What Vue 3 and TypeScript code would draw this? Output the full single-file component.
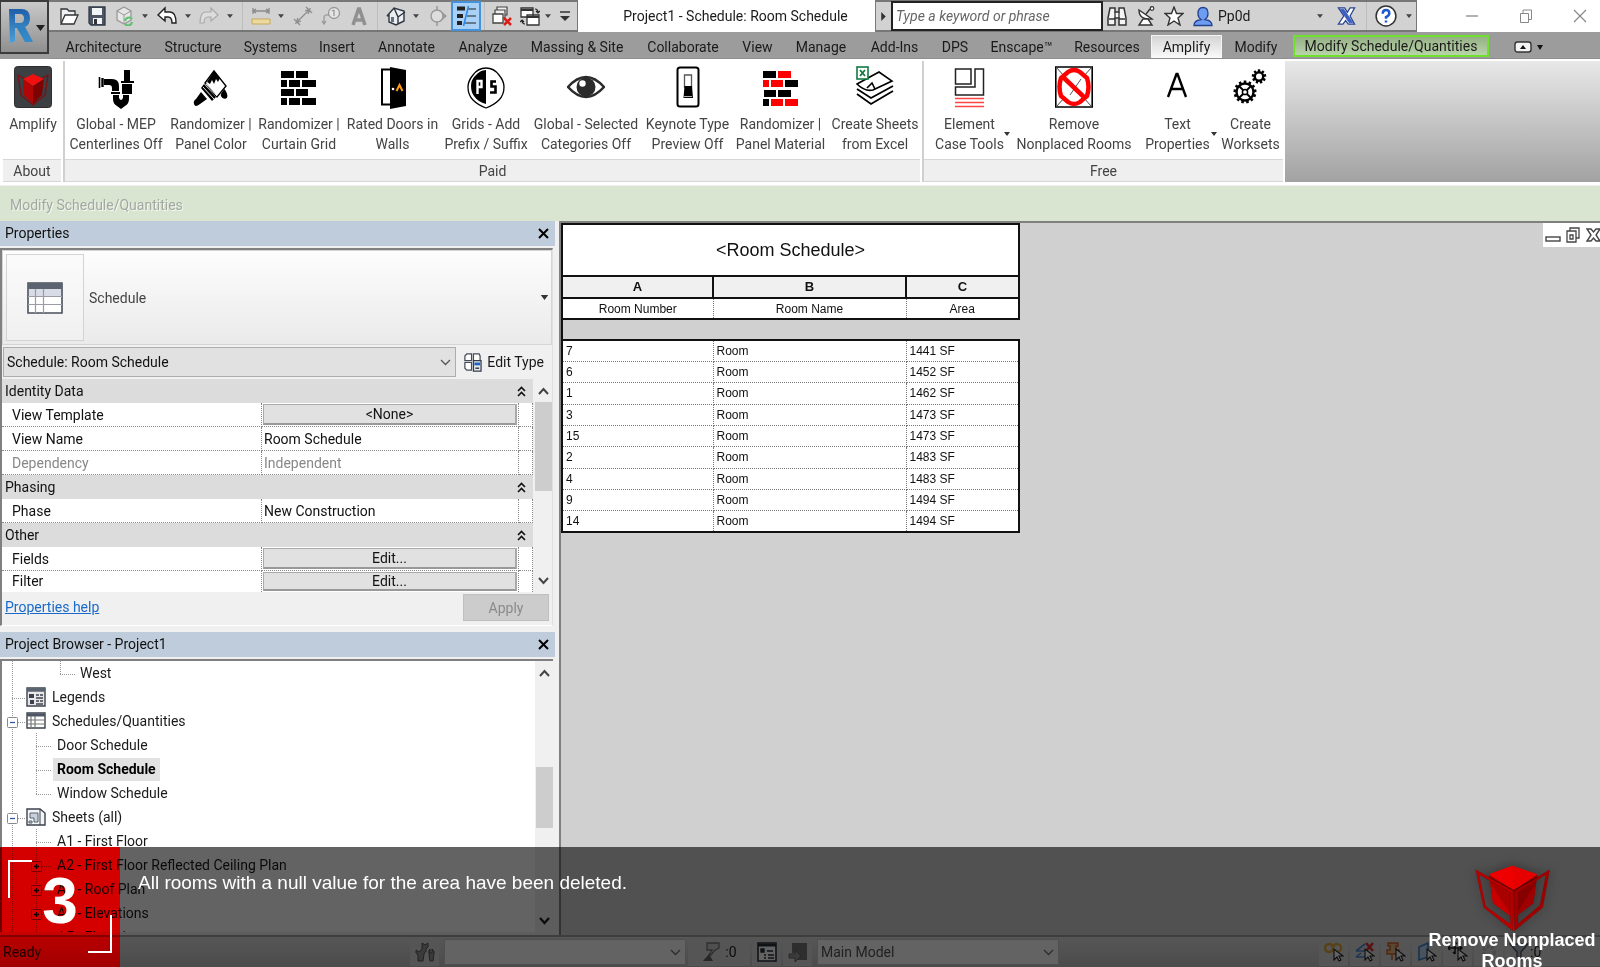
<script setup lang="ts">
import { ref } from 'vue'

interface Tool { icon: string; label: string; kind?: 'arrow' | 'sep' | 'active' }
interface RibbonTool { icon: string; lines: string[]; menu?: boolean }
interface PropRow { kind: 'heading' | 'plain' | 'action' | 'muted'; label: string; value?: string }
interface TreeRow { level: 1 | 2 | 3; label: string; icon?: string; box?: '+' | '-'; last?: boolean; bold?: boolean }

const arrow: Tool = { icon: '', label: 'More', kind: 'arrow' }
const sep: Tool = { icon: '', label: '', kind: 'sep' }

const quickTools: Tool[] = [
  { icon: 'open', label: 'Open' }, { icon: 'save', label: 'Save' }, { icon: 'sync', label: 'Synchronize' }, arrow,
  { icon: 'undo', label: 'Undo' }, arrow, { icon: 'redo', label: 'Redo' }, arrow, sep,
  { icon: 'measure', label: 'Measure' }, arrow, { icon: 'dimension', label: 'Dimension' },
  { icon: 'tag', label: 'Tag' }, { icon: 'letter', label: 'Text' }, sep,
  { icon: 'house', label: '3D View' }, arrow, { icon: 'section', label: 'Section' },
  { icon: 'thin', label: 'Thin Lines', kind: 'active' }, sep,
  { icon: 'closeWin', label: 'Close Inactive' }, { icon: 'switchWin', label: 'Switch Windows' }, arrow,
  { icon: 'customize', label: 'Customize' },
]

const tabs = ['Architecture', 'Structure', 'Systems', 'Insert', 'Annotate', 'Analyze', 'Massing & Site', 'Collaborate',
  'View', 'Manage', 'Add-Ins', 'DPS', 'Enscape™', 'Resources', 'Amplify', 'Modify', 'Modify Schedule/Quantities']
const activeTab = ref('Amplify')

const ribbon: { name: string; cls: string; tools: RibbonTool[] }[] = [
  { name: 'About', cls: 'about', tools: [{ icon: 'amplify', lines: ['Amplify'] }] },
  {
    name: 'Paid', cls: 'paid', tools: [
      { icon: 'pipe', lines: ['Global - MEP', 'Centerlines Off'] },
      { icon: 'paint', lines: ['Randomizer |', 'Panel Color'] },
      { icon: 'bricks', lines: ['Randomizer |', 'Curtain Grid'] },
      { icon: 'door', lines: ['Rated Doors in', 'Walls'] },
      { icon: 'prefix', lines: ['Grids - Add', 'Prefix / Suffix'] },
      { icon: 'eye', lines: ['Global - Selected', 'Categories Off'] },
      { icon: 'keynote', lines: ['Keynote Type', 'Preview Off'] },
      { icon: 'redBricks', lines: ['Randomizer |', 'Panel Material'] },
      { icon: 'sheets', lines: ['Create Sheets', 'from Excel'] },
    ],
  },
  {
    name: 'Free', cls: 'free', tools: [
      { icon: 'element', lines: ['Element', 'Case Tools'], menu: true },
      { icon: 'remove', lines: ['Remove', 'Nonplaced Rooms'] },
      { icon: 'textA', lines: ['Text', 'Properties'], menu: true },
      { icon: 'gears', lines: ['Create', 'Worksets'] },
    ],
  },
]

const props: PropRow[] = [
  { kind: 'heading', label: 'Identity Data' },
  { kind: 'action', label: 'View Template', value: '<None>' },
  { kind: 'plain', label: 'View Name', value: 'Room Schedule' },
  { kind: 'muted', label: 'Dependency', value: 'Independent' },
  { kind: 'heading', label: 'Phasing' },
  { kind: 'plain', label: 'Phase', value: 'New Construction' },
  { kind: 'heading', label: 'Other' },
  { kind: 'action', label: 'Fields', value: 'Edit...' },
  { kind: 'action', label: 'Filter', value: 'Edit...' },
]

const tree: TreeRow[] = [
  { level: 3, label: 'West', last: true },
  { level: 1, label: 'Legends', icon: 'legend' },
  { level: 1, label: 'Schedules/Quantities', icon: 'grid', box: '-' },
  { level: 2, label: 'Door Schedule' },
  { level: 2, label: 'Room Schedule', bold: true },
  { level: 2, label: 'Window Schedule', last: true },
  { level: 1, label: 'Sheets (all)', icon: 'sheet', box: '-' },
  { level: 2, label: 'A1 - First Floor' },
  { level: 2, label: 'A2 - First Floor Reflected Ceiling Plan', box: '+' },
  { level: 2, label: 'A3 - Roof Plan', box: '+' },
  { level: 2, label: 'A4 - Elevations', box: '+' },
  { level: 2, label: 'A5 - Elevations', box: '+' },
]
const guideWidth = { 1: 26, 2: 53, 3: 76 }
const branchX = { 1: 12, 2: 36, 3: 60 }

const rooms: [string, string, string][] = [
  ['7', 'Room', '1441 SF'], ['6', 'Room', '1452 SF'], ['1', 'Room', '1462 SF'],
  ['3', 'Room', '1473 SF'], ['15', 'Room', '1473 SF'], ['2', 'Room', '1483 SF'],
  ['4', 'Room', '1483 SF'], ['9', 'Room', '1494 SF'], ['14', 'Room', '1494 SF'],
]

function bricks(alt: string): string {
  const rows: [number, number, number, boolean][] = [
    [1, 5, 13, false], [16, 5, 13, true],
    [1, 14, 6, true], [9, 14, 12, true], [23, 14, 13, false],
    [2, 24, 12, false], [16, 24, 13, false],
    [1, 33, 6, false], [9, 33, 12, true], [23, 33, 13, true],
  ]
  return rows.map(([x, y, w, c]) => `<rect x="${x}" y="${y}" width="${w}" height="7" fill="${c ? alt : '#000'}"/>`).join('')
}

function gear(cx: number, cy: number, r: number, n: number, w: number): string {
  const teeth = Array.from({ length: n }, (_, i) =>
    `<rect x="${cx - w / 2}" y="${cy - r - 3}" width="${w}" height="5" transform="rotate(${(360 / n) * i} ${cx} ${cy})"/>`).join('')
  return `${teeth}<circle cx="${cx}" cy="${cy}" r="${r}" fill="#fff" stroke="#000" stroke-width="2.4"/>`
}

const ribbonIcons: Record<string, string> = {
  amplify: '<rect x=".5" y=".5" width="37" height="41" rx="3" fill="#3c4043" stroke="#2b2d2f"/><path d="M4 9l15 8 15-8-3 20-12 10L7 29z" fill="none" stroke="#7b1013" stroke-width="1.3"/><path d="M9 13l10-5 11 5-11 7z" fill="#f01010"/><path d="M9 13l10 7v18L10 29z" fill="#b20505"/><path d="M30 13l-11 7v18l9-9z" fill="#7d0303"/>',
  pipe: '<path d="M2.500 11v11" stroke="#000" stroke-width="1.600"/><path d="M5.500 12v9" stroke="#000" stroke-width="2.400"/><path d="M7 13h8q7 0 7 7v5h-7v-3q0-3-3-3H7zM14 26h9v2h-9zM16 29h6v3q2 4 4 0v-3h6v4q0 5-4 7l-4 3-4-3q-4-2-4-7zM27 4h6v11h-6zM24 15h13v2H24zM25 18h10v10H25z"/>',
  paint: '<path d="M22 5l12 15-9 11L13 17z" fill="#fff" stroke="#000" stroke-width="1.400"/><path d="M22 5l6 7-2 4-2-3-2 5-2-4-2 4-3-2z"/><path d="M12 18l12 13-4 4-11-13z"/><path d="M11 21l11 12M14 18l11 12" stroke="#fff" stroke-width=".9"/><path d="M9 26l6 7-7 5q-5 4-6 0-1-3 2-5z"/><path d="M32.500 23q4 6 2.500 8.500t-5 0 2.500-8.500z"/>',
  bricks: '<path d="M1 5h13v7H1zM16 5h12v7H16zM1 14h6v7H1zM9 14h11v7H9zM22 14h14v7H22zM1 23h13v7H1zM16 23h12v7H16zM1 32h6v7H1zM9 32h11v7H9zM22 32h14v7H22z"/>',
  door: '<path d="M8 3.500h11v35H8z" fill="#fff" stroke="#000" stroke-width="2"/><path d="M16 1l16 3v36l-16 3z"/><path d="M22.500 25l3-6 3 6" fill="none" stroke="#ff9a1a" stroke-width="2"/><circle cx="19" cy="23" r="1.300" fill="#fff"/>',
  prefix: '<path d="M19 2q8 0 13 7 5 6 5 12 0 8-5 13t-13 8q-8-3-13-8T1 21q0-6 5-12 5-7 13-7z" fill="#fff" stroke="#000" stroke-width="1.300"/><path d="M19 4v34q-8-2-12-8-3-4-3-10t4-10q5-6 11-6z"/><path d="M10.500 28V15h4v6h-4" fill="none" stroke="#fff" stroke-width="2.400"/><path d="M29 15.500h-4.500v5h4v6H23" fill="none" stroke="#000" stroke-width="2.600"/>',
  eye: '<path d="M1 21Q19 1 37 21 19 41 1 21z" fill="#fff" stroke="#2b2b2b" stroke-width="2.600"/><circle cx="19" cy="21" r="9.500" fill="#2b2b2b"/><circle cx="15.500" cy="17.500" r="3.200" fill="#fff"/>',
  keynote: '<rect x="8.500" y="1.500" width="21" height="39" rx="2.500" fill="#fff" stroke="#000" stroke-width="2"/><path d="M15.500 9h7v12h-7z" fill="#fff" stroke="#555" stroke-width="1.300"/><path d="M15.500 20h7.500l1 12h-9.500z"/><path d="M15 30.500h8" stroke="#fff" stroke-width=".7"/>',
  redBricks: bricks('#f00'),
  sheets: '<path d="M1 18L23 6l13 9-19 9q-8 2-16-6z" fill="#fff" stroke="#000" stroke-width="1.600"/><path d="M1 23l14 9 22-12M1 28l14 10 22-13" fill="none" stroke="#000" stroke-width="1.800"/><path d="M11 22l5-5 3 6" fill="none" stroke="#000" stroke-width="1.600"/><rect x="1" y="1" width="11" height="12" fill="#fff" stroke="#0f7b41" stroke-width="1.600"/><path d="M4 4l5 6M9 4l-5 6" stroke="#0f7b41" stroke-width="1.800"/>',
  element: '<path d="M4.500 3h15.500v15H4.500zM24 3h8.500v26H4.500v-8H24z" fill="#fff" stroke="#222" stroke-width="1.500"/><path d="M4 32.500h29M4 36.500h29M4 40.500h29" stroke="#f44" stroke-width="1.600"/>',
  remove: '<path d="M.8 1h36.400v40H.8z" fill="#fff" stroke="#000" stroke-width="1.600"/><path d="M1 1l36 40M37 1L1 41" stroke="#444"/><path d="M13 6q6-4 12 0l7 6q3 9 0 18l-7 6q-6 4-12 0l-7-6q-3-9 0-18z" fill="#fff" stroke="#f00" stroke-width="4.500"/><path d="M15 29l11-16" stroke="#555"/><path d="M8 11l22 21" stroke="#f00" stroke-width="4.500"/>',
  textA: '<path d="M9 31l8.500-23h1L27 31M12 23h12" fill="none" stroke="#000" stroke-width="2.400"/>',
  gears: gear(13, 26, 8.5, 13, 2.6) + '<path d="M7 20l12 12M19 20L7 32" stroke="#000" stroke-width="1.800"/><circle cx="13" cy="26" r="2.600" fill="#fff" stroke="#000" stroke-width="1.500"/>' + gear(27, 10.5, 4.2, 9, 2.4),
}

const icons: Record<string, string> = {
  open: '<path d="M2 17V3h6l2 2h6v4" fill="#eef0f3" stroke="#333" stroke-width="1.300"/><path d="M2 18l4-9h13l-4 9z" fill="#fff" stroke="#333" stroke-width="1.300"/>',
  save: '<path d="M2 1h16v18H4l-2-2z" fill="#4c5664" stroke="#333b46" stroke-width="1.300"/><path d="M5 2h10v7H5zM6 12h9v6H6z" fill="#f3f4f6"/><path d="M7 13h3v5H7z" fill="#333"/>',
  sync: '<path d="M10 1l7 4v9l-7 4-7-4V5z" fill="#e6e6e6" stroke="#999" stroke-width="1.300"/><path d="M3 5l7 4 7-4M10 9v9" fill="none" stroke="#999"/><path d="M11 15a4 4 0 017-2M18 16a4 4 0 01-7 2" fill="none" stroke="#5cc36d" stroke-width="2"/>',
  undo: '<path d="M1 9l7-7v4h5q6 0 6 11h-4q0-6-4-6H8v4z" fill="#fff" stroke="#222" stroke-width="1.400"/>',
  redo: '<path d="M19 9l-7-7v4H7q-6 0-6 11h4q0-6 4-6h3v4z" fill="#ddd" stroke="#aaa" stroke-width="1.200"/>',
  measure: '<path d="M2 5h16M2 2v6M18 2v6M5 3L2 5l3 2M15 3l3 2-3 2" fill="none" stroke="#8b8b8b" stroke-width="1.300"/><path d="M1 13h18v5H1z" fill="#ecd9a0" stroke="#c9a95a"/>',
  dimension: '<path d="M3 17L17 3M1 13l6 6M13 1l6 6M5 12l-2 5 5-2M12 5l5-2-2 5" fill="none" stroke="#8f8f8f" stroke-width="1.300"/>',
  tag: '<circle cx="13" cy="7" r="5.500" fill="#e4e4e4" stroke="#999" stroke-width="1.300"/><path d="M13 4v6M11 5l2-1M8 9q-5-1-5 3v6M1 15l2 3 2-3" fill="none" stroke="#999" stroke-width="1.300"/>',
  letter: '<path d="M4 19L9.500 3h1L16 19M6 14h8" fill="none" stroke="#909090" stroke-width="3.500"/>',
  house: '<path d="M1 10l7-8 10 3v10l-8 4-7-3V9z" fill="#eceff2" stroke="#2e3640" stroke-width="1.400"/><path d="M8 2l4 9v7M12 11l7-5" fill="none" stroke="#2e3640" stroke-width="1.400"/><path d="M5 11h3v5H5z" fill="#66717e"/>',
  section: '<path d="M9 0v5M9 15v5" stroke="#999" stroke-width="1.500"/><path d="M12 4l7 6-7 6z" fill="#999"/><circle cx="9" cy="10" r="6" fill="#ddd" stroke="#999" stroke-width="1.400"/>',
  thin: '<path d="M1 2.500h8M1 10h6M1 17h5" stroke="#222" stroke-width="4"/><path d="M12 3h8M11 10h9M9 17h11" stroke="#222" stroke-width="1.200"/><path d="M12.500 0L7.500 20" stroke="#2c8ae8" stroke-width="1.600"/>',
  closeWin: '<path d="M5 1h10v8H5z" fill="#eee" stroke="#444" stroke-width="1.200"/><path d="M3 4h10v8H3z" fill="#eee" stroke="#444" stroke-width="1.200"/><path d="M1 8h10v9H1z" fill="#fff" stroke="#444" stroke-width="1.300"/><path d="M12 12l7 7M19 12l-7 7" stroke="#d9201a" stroke-width="2.600"/>',
  switchWin: '<path d="M1 2h12v9H1zM7 9h12v10H7z" fill="#fff" stroke="#333" stroke-width="1.300"/><path d="M1 4h12M7 11h12" stroke="#333" stroke-width="2"/><path d="M15 3q3 0 3 4M16 5l2 2 2-2M5 18q-3 0-3-4M0 16l2-2 2 2" fill="none" stroke="#222" stroke-width="1.200"/>',
  customize: '<path d="M5 6h10" stroke="#333" stroke-width="1.500"/><path d="M5 10h10l-5 5z" fill="#333"/>',
  binoc: '<path d="M3 2h5v4h4V2h5l2 10v7h-7v-7H8v7H1v-7z" fill="#f5f5f5" stroke="#333" stroke-width="1.500"/><path d="M8 6v6M12 6v6M2 13h6M12 13h6" stroke="#333" stroke-width="1.300"/>',
  dish: '<path d="M3 4q0 10 13 9z" fill="#fff" stroke="#333" stroke-width="1.400"/><path d="M10 8l4-5" stroke="#333" stroke-width="1.400"/><circle cx="16" cy="2.500" r="1.800" fill="#fff" stroke="#333" stroke-width="1.200"/><path d="M3 19h13l-4-6H7z" fill="#fff" stroke="#333" stroke-width="1.400"/>',
  star: '<path d="M10 1l2.500 6.500H19l-5 4.500 2 7-6-4-6 4 2-7-5-4.500h6.500z" fill="#fff" stroke="#333" stroke-width="1.400"/>',
  user: '<path d="M10 1q5 0 5 6 0 4-3 6 7 1 7 6H1q0-5 7-6-3-2-3-6 0-6 5-6z" fill="#6d9df2" stroke="#23438f" stroke-width="1.300"/>',
  exchange: '<path d="M1 1h7l3 5 3-5h5l-5 9 5 9h-7l-3-4-3 4H1l6-9z" fill="#fff" stroke="#2a4590" stroke-width="1.400"/><path d="M3 2.500h4l10 15h-4z" fill="#3a5fc0" stroke="#3a5fc0"/>',
  help: '<circle cx="10" cy="10" r="9" fill="#fff" stroke="#333" stroke-width="1.400"/><path d="M7 8q0-3.500 3-3.500T13 7.500q0 2-3 3.500v1.500M10 14v2" fill="none" stroke="#1f57cf" stroke-width="2.300"/>',
  legend: '<path d="M1 1h18v18H1z" fill="#e8e8ea" stroke="#3b424d" stroke-width="1.400"/><path d="M1 3h18" stroke="#5b6370" stroke-width="3.500"/><path d="M3 7h5v4H3zM4 13h4v4H4z" fill="#3b424d"/><path d="M10 8h3M14 8h3M10 11h7M10 14h3M14 14h3M10 17h7" stroke="#3b424d" stroke-width="1.300"/>',
  grid: '<path d="M1 2h18v15H1z" fill="#fff" stroke="#3b424d" stroke-width="1.400"/><path d="M1 4h18" stroke="#4c5664" stroke-width="3"/><path d="M1 9h18M1 13h18M5 5v12M9 5v12" stroke="#777" stroke-width="1.200"/>',
  sheet: '<path d="M1 2h13l5 4v12H1z" fill="#f3f4f6" stroke="#3b424d" stroke-width="1.400"/><path d="M14 2v16" stroke="#3b424d"/><path d="M4 6h8v9H8v-4H4zM3 14h3v2H3z" fill="#c8d1dc" stroke="#59636f"/>',
  editType: '<path d="M2 3l2-2h5v7H2zM11 1h6l1 2v5h-7zM2 10h7v8H4l-2-2z" fill="#fff" stroke="#444c57" stroke-width="1.300"/><path d="M11 8h8v11h-8z" fill="#e5ebf3" stroke="#333b46" stroke-width="1.300"/><path d="M12 10h6v3h-6z" fill="#1d62c4"/><path d="M13 16h4" stroke="#333" stroke-width="1.500"/>',
  wrench: '<path d="M7 5V1l3 2 3-2v4l-2 2v2l-2 3-1 7H3v-6l-2-2V8l3 2 3-3zM15 7v4h2V7q3 2 2 5l-1 7h-3l-1-7q-1-3 1-5z" fill="#999" stroke="#555"/>',
  filter: '<path d="M6 1h12v5l-5 3-3 4H8l3-5H6z" fill="#ccc" stroke="#777" stroke-width="1.300"/><path d="M2 19l6-7 4 7z" fill="#666"/>',
  list: '<path d="M1 1h18v18H1z" fill="#fff" stroke="#2b313a" stroke-width="1.600"/><path d="M1 3h18" stroke="#2b313a" stroke-width="3"/><path d="M4 7h3v3H4zM10 9h6M7 13h2M11 13h6M7 16h2M11 16h6" fill="#2b313a" stroke="#2b313a" stroke-width="1.400"/>',
  exclude: '<path d="M4 1h15v17H9V11H4z" fill="#777"/><path d="M1 12h6V8l6 6-6 6v-4H1z" fill="#999" stroke="#666"/>',
  selLink: '<path d="M1 6a4 4 0 014-4q3 0 4 3 1-3 4-3a4 4 0 010 8q-3 0-4-3-1 3-4 3a4 4 0 01-4-4z" fill="none" stroke="#e0a83a" stroke-width="2.400"/>',
  selUnder: '<path d="M1 9l9-7M1 9h9M1 15h12M1 15l5-4" fill="none" stroke="#4b86d6" stroke-width="1.600"/><path d="M11 1l7 8M18 1l-7 8" stroke="#d33" stroke-width="2.600"/>',
  selPin: '<path d="M2 1h10v3h-2v4h3v4H1V8h3V4H2zM6 12v6" fill="#e8b98a" stroke="#d0652a" stroke-width="1.500"/>',
  selFace: '<path d="M2 5l9-4v14L2 18z" fill="#b9d6f2" stroke="#3e82c4" stroke-width="1.600"/>',
  drag: '<path d="M0 6h14M7 0v12M2 4L0 6l2 2M12 4l2 2-2 2M5 2l2-2 2 2M5 10l2 2" fill="none" stroke="#222" stroke-width="1.600"/>',
  gearSoft: '<circle cx="10" cy="10" r="6" fill="none" stroke="#bbb" stroke-width="4" stroke-dasharray="3 2"/>',
  funnel: '<path d="M1 2h18l-7 8v8l-4-3v-5z" fill="#a9b3c0" stroke="#4a525e" stroke-width="1.300"/>',
}
const cursor = '<path d="M10 7v11l3-3 2 4 2-1-2-4h4z" fill="#fff" stroke="#222" stroke-width="1.100"/>'
const statusTools = ['selLink', 'selUnder', 'selPin', 'selFace', 'drag']
</script>

<template>
  <div class="app">
    <header class="head">
      <button class="app-btn" aria-label="Application menu">
        <svg width="48" height="54" viewBox="0 0 48 54">
          <defs>
            <linearGradient id="rg" x1="0" y1="0" x2="0" y2="1"><stop offset="0" stop-color="#1d5fa8" /><stop offset="1" stop-color="#4ba0d8" /></linearGradient>
          </defs>
          <path d="M9 9h12q9 0 9 9 0 7-5 9l8 15h-8l-8-14h-2v13l-5 2z M15 14v9h5q4 0 4-4.500T20 14z" fill="url(#rg)" fill-rule="evenodd" />
          <path d="M17 28l8 14h8l-8-15z" fill="#2b7fc0" opacity=".6" />
          <path d="M36 25h9l-4.500 6z" fill="#222" />
        </svg>
      </button>
      <div class="titlebar">
        <div class="qat">
          <template v-for="(t, i) in quickTools" :key="i">
            <span v-if="t.kind === 'sep'" class="vsep"></span>
            <button v-else :class="['flat', t.kind]" :aria-label="t.label">
              <svg v-if="t.kind === 'arrow'" width="6" height="4" viewBox="0 0 8 5"><path d="M0 0h8L4 5z" fill="#444" /></svg>
              <svg v-else width="20" height="20" viewBox="0 0 20 20" v-html="icons[t.icon]"></svg>
            </button>
          </template>
        </div>
        <div class="title">Project1 - Schedule: Room Schedule</div>
        <div class="info">
          <button class="flat" aria-label="Collapse search"><svg width="5" height="9" viewBox="0 0 5 10"><path d="M0 0l5 5-5 5z" fill="#333" /></svg></button>
          <input class="search" type="text" placeholder="Type a keyword or phrase" aria-label="Search" />
          <button v-for="n in ['binoc', 'dish', 'star']" :key="n" class="flat" :aria-label="n"><svg width="20" height="20" viewBox="0 0 20 20" v-html="icons[n]"></svg></button>
          <button class="flat user"><svg width="20" height="21" viewBox="0 0 20 20" v-html="icons.user"></svg><span>Pp0d</span></button>
          <button class="flat" aria-label="Account menu"><svg width="6" height="4" viewBox="0 0 8 5"><path d="M0 0h8L4 5z" fill="#444" /></svg></button>
          <button class="flat" aria-label="Exchange"><svg width="19" height="18" viewBox="0 0 20 20" v-html="icons.exchange"></svg></button>
          <span class="vsep"></span>
          <button class="flat" aria-label="Help"><svg width="22" height="22" viewBox="0 0 20 20" v-html="icons.help"></svg></button>
          <button class="flat" aria-label="Help menu"><svg width="6" height="4" viewBox="0 0 8 5"><path d="M0 0h8L4 5z" fill="#444" /></svg></button>
        </div>
        <div class="winctl">
          <button class="flat" aria-label="Minimize"><svg width="14" height="14" viewBox="0 0 14 14"><path d="M1 7h12" stroke="#888" stroke-width="1.300" /></svg></button>
          <button class="flat" aria-label="Restore"><svg width="14" height="14" viewBox="0 0 14 14" fill="none" stroke="#888"><path d="M1.500 4.500h8v9h-8zM4 4V1h8.500v9.500H10" /></svg></button>
          <button class="flat" aria-label="Close"><svg width="14" height="14" viewBox="0 0 14 14"><path d="M1 1l12 12M13 1L1 13" stroke="#888" stroke-width="1.200" /></svg></button>
        </div>
      </div>
      <nav class="tabs">
        <button v-for="t in tabs" :key="t" :class="['tab', { on: t === activeTab, ctx: t.startsWith('Modify S') }]" @click="activeTab = t">{{ t }}</button>
        <button class="flat cycle" aria-label="Minimize ribbon">
          <svg width="30" height="14" viewBox="0 0 30 14"><rect x="1" y="2" width="16" height="10" rx="2.500" fill="#f4f4f4" stroke="#333" stroke-width="1.400" /><path d="M6 9l3-4 3 4zM23 5h6l-3 5z" fill="#111" /></svg>
        </button>
      </nav>
    </header>

    <section class="ribbon">
      <div v-for="g in ribbon" :key="g.name" :class="['group', g.cls]">
        <div class="tools">
          <button v-for="t in g.tools" :key="t.icon" class="tool">
            <svg width="38" height="43" viewBox="0 0 38 43" v-html="ribbonIcons[t.icon]"></svg>
            <span class="lbl"><span v-for="l in t.lines" :key="l">{{ l }}</span></span>
            <svg v-if="t.menu" class="caret" width="6" height="4" viewBox="0 0 6 4"><path d="M0 0h6L3 4z" fill="#333" /></svg>
          </button>
        </div>
        <div class="gname">{{ g.name }}</div>
      </div>
      <div class="rest"></div>
    </section>

    <div class="options">Modify Schedule/Quantities</div>

    <main class="work">
      <aside class="side">
        <section class="panel properties">
          <h2 class="phead">Properties<button class="flat" aria-label="Close Properties"><svg width="11" height="11" viewBox="0 0 11 11"><path d="M1 1l9 9M10 1l-9 9" stroke="#000" stroke-width="2" /></svg></button></h2>
          <div class="pbody">
            <button class="type">
              <span class="thumb">
                <svg width="36" height="32" viewBox="0 0 36 32"><path d="M1 1h34v30H1z" fill="#fff" stroke="#4a505b" stroke-width="1.600" /><path d="M1 1h34v6H1z" fill="#5b6270" /><path d="M2 7h32v7H2z" fill="#d8dce6" /><path d="M1 14.500h34M1 22.500h34M8.500 7v24M16.500 7v24" stroke="#9a9da3" stroke-width="1.200" /></svg>
              </span>
              <span class="tname">Schedule</span>
              <svg width="9" height="5" viewBox="0 0 9 6"><path d="M0 0h9L4.500 6z" fill="#333" /></svg>
            </button>
            <div class="selrow">
              <span class="combo">
                <select aria-label="Type filter"><option>Schedule: Room Schedule</option></select>
                <svg width="11" height="7" viewBox="0 0 11 7"><path d="M1 1l4.500 4.500L10 1" fill="none" stroke="#555" stroke-width="1.300" /></svg>
              </span>
              <button class="flat edit"><svg width="19" height="21" viewBox="0 0 20 20" v-html="icons.editType"></svg>Edit Type</button>
            </div>
            <div class="gridwrap">
              <table class="pgrid">
                <colgroup><col class="c1" /><col class="c2" /><col class="c3" /></colgroup>
                <tbody>
                  <tr v-for="r in props" :key="r.label" :class="r.kind">
                    <template v-if="r.kind === 'heading'">
                      <th colspan="3"><span class="gh">{{ r.label }}<svg width="9" height="11" viewBox="0 0 9 11"><path d="M1 5l3.500-3.500L8 5M1 10l3.500-3.500L8 10" fill="none" stroke="#111" stroke-width="1.600" /></svg></span></th>
                    </template>
                    <template v-else>
                      <td class="k">{{ r.label }}</td>
                      <td class="v"><button v-if="r.kind === 'action'" class="cellbtn" :aria-label="r.label">{{ r.value }}</button><template v-else>{{ r.value }}</template></td>
                      <td></td>
                    </template>
                  </tr>
                </tbody>
              </table>
              <div class="scroll">
                <svg width="11" height="8" viewBox="0 0 11 8"><path d="M1 7l4.500-5L10 7" fill="none" stroke="#444" stroke-width="2" /></svg>
                <span class="thumb1"></span>
                <svg class="down" width="11" height="8" viewBox="0 0 11 8"><path d="M1 1l4.500 5L10 1" fill="none" stroke="#444" stroke-width="2" /></svg>
              </div>
            </div>
            <div class="pfoot"><a href="#">Properties help</a><button class="apply" disabled>Apply</button></div>
          </div>
        </section>

        <section class="panel browser">
          <h2 class="phead">Project Browser - Project1<button class="flat" aria-label="Close Project Browser"><svg width="11" height="11" viewBox="0 0 11 11"><path d="M1 1l9 9M10 1l-9 9" stroke="#000" stroke-width="2" /></svg></button></h2>
          <div class="tbody">
            <ul class="tree">
              <li v-for="(n, i) in tree" :key="i" :class="'l' + n.level">
                <svg :width="guideWidth[n.level]" height="24">
                  <g stroke="#9a9a9a" stroke-dasharray="1 1" fill="none">
                    <path d="M12.500 0v24" />
                    <path v-if="n.level > 1" :d="`M${branchX[n.level]}.500 0v${n.last ? 13 : 24}`" />
                    <path :d="`M${branchX[n.level]} 13.500H${guideWidth[n.level] - 1}`" />
                  </g>
                  <g v-if="n.box" :transform="`translate(${branchX[n.level] - 5} 8)`">
                    <rect x=".5" y=".5" width="10" height="10" rx="1" fill="#fff" stroke="#888" />
                    <path :d="n.box === '+' ? 'M3 5.500h5M5.500 3v5' : 'M3 5.500h5'" :stroke="n.box === '+' ? '#111' : '#3a56a8'" stroke-width="1.300" />
                  </g>
                </svg>
                <svg v-if="n.icon" width="20" height="20" viewBox="0 0 20 20" v-html="icons[n.icon]"></svg>
                <span :class="['node', { bold: n.bold }]">{{ n.label }}</span>
              </li>
            </ul>
            <div class="scroll">
              <svg width="11" height="8" viewBox="0 0 11 8"><path d="M1 7l4.500-5L10 7" fill="none" stroke="#444" stroke-width="2" /></svg>
              <span class="thumb2"></span>
              <svg class="down" width="11" height="8" viewBox="0 0 11 8"><path d="M1 1l4.500 5L10 1" fill="none" stroke="#222" stroke-width="2.400" /></svg>
            </div>
          </div>
        </section>
      </aside>

      <section class="canvas">
        <table class="sched">
          <colgroup><col class="a" /><col class="b" /><col class="c" /></colgroup>
          <thead>
            <tr class="t"><th colspan="3">&lt;Room Schedule&gt;</th></tr>
            <tr class="abc"><th>A</th><th>B</th><th>C</th></tr>
            <tr class="names"><th>Room Number</th><th>Room Name</th><th>Area</th></tr>
            <tr class="gap"><td colspan="3"></td></tr>
          </thead>
          <tbody>
            <tr v-for="r in rooms" :key="r[0]"><td v-for="(c, i) in r" :key="i">{{ c }}</td></tr>
          </tbody>
        </table>
        <div class="mdi">
          <button class="flat" aria-label="Minimize view"><svg width="16" height="16" viewBox="0 0 16 16"><rect x="1" y="10" width="14" height="4" fill="#fff" stroke="#444" stroke-width="1.400" /></svg></button>
          <button class="flat" aria-label="Restore view"><svg width="14" height="16" viewBox="0 0 14 16" fill="#fff" stroke="#444" stroke-width="1.300"><path d="M4 4V1h9v10h-3" /><path d="M1 4h9v11H1zM4 8h3v4H4z" /></svg></button>
          <button class="flat" aria-label="Close view"><svg width="15" height="14" viewBox="0 0 15 14"><path d="M1 1h4l2.500 3L10 1h4l-4 6 4 6h-4l-2.500-3L5 13H1l4-6z" fill="#fff" stroke="#444" stroke-width="1.400" /></svg></button>
        </div>
      </section>
    </main>

    <footer class="status">
      <span class="ready">Ready</span>
      <span class="cell"><svg width="20" height="22" viewBox="0 0 20 20" v-html="icons.wrench"></svg></span>
      <span class="combo st"><select aria-label="Workset"><option></option></select><svg width="11" height="7" viewBox="0 0 11 7"><path d="M1 1l4.500 4.500L10 1" fill="none" stroke="#777" stroke-width="1.400" /></svg></span>
      <span class="cell wide"><svg width="20" height="22" viewBox="0 0 20 20" v-html="icons.filter"></svg>:0</span>
      <span class="cell"><svg width="20" height="22" viewBox="0 0 20 20" v-html="icons.list"></svg></span>
      <span class="cell"><svg width="20" height="22" viewBox="0 0 20 20" v-html="icons.exclude"></svg></span>
      <span class="combo st"><select aria-label="Design option"><option>Main Model</option></select><svg width="11" height="7" viewBox="0 0 11 7"><path d="M1 1l4.500 4.500L10 1" fill="none" stroke="#777" stroke-width="1.400" /></svg></span>
      <span class="push"></span>
      <span v-for="s in statusTools" :key="s" class="cell"><svg width="20" height="22" viewBox="0 0 20 20" v-html="icons[s] + cursor"></svg></span>
      <span class="cell"><svg width="18" height="18" viewBox="0 0 20 20" v-html="icons.gearSoft"></svg></span>
      <span class="cell last"><svg width="20" height="20" viewBox="0 0 20 20" v-html="icons.funnel"></svg>:0</span>
    </footer>

    <div class="shade"></div>
    <div class="badge"></div>
    <div class="caption">
      <div class="step">
        <svg width="120" height="120" viewBox="0 0 120 120" fill="none" stroke="#fff" stroke-width="2"><path d="M32 14H9v37M111 68v37H88" /></svg>
        <strong>3</strong>
      </div>
      <p class="msg">All rooms with a null value for the area have been deleted.</p>
      <div class="brand">
        <svg width="75" height="67" viewBox="0 0 225 200">
          <path d="M42 28l70-25 75 25-70 47z" fill="#e60000" />
          <path d="M42 28l72 47v83l-60-44z" fill="#a90000" />
          <path d="M187 28l-70 47v83l58-44z" fill="#870000" />
          <path d="M54 114l-8-60 68 104z" fill="#c80000" />
          <path d="M175 114l8-60-66 104z" fill="#a00000" />
          <path d="M2 14l112 62v121L26 127zM12 28l20 95 74 54V81z" fill="#b80000" fill-rule="evenodd" stroke="#7a0000" />
          <path d="M224 14L118 76v121l85-70zM213 28l-18 92-66 56V81z" fill="#a00000" fill-rule="evenodd" stroke="#7a0000" />
          <path d="M42 27l70-25 75 25-71 48z" fill="#e60000" />
          <path d="M42 27l70-25 4 73z" fill="#f40000" opacity=".6" />
          <path d="M42 36l74 40 71-40" fill="none" stroke="#3a0000" stroke-width="2" />
        </svg>
        <b>Remove Nonplaced Rooms</b>
      </div>
    </div>
  </div>
</template>

<style>
html, body { margin: 0; background: #f0f0f0; }
</style>

<style scoped>
.app {
  --ui: Roboto, "Open Sans", sans-serif;
  position: relative; display: flex; flex-direction: column; height: 100vh; overflow: hidden;
  font: 14px/20px var(--ui); color: #1a1a1a; background: #f0f0f0;
}
.app * { box-sizing: border-box; }
button, select, input { font: inherit; color: inherit; margin: 0; }
svg { display: block; flex: none; }
.flat { border: 0; background: none; padding: 0; display: flex; align-items: center; justify-content: center; min-width: 0; }

.head { display: grid; grid-template-columns: 49px 1fr; grid-template-rows: 32px 27px; background: #9c9c9c; flex: none; }
.app-btn { grid-row: 1 / 3; height: 54px; padding: 0; border: 2px solid #3b3b3b; border-left-width: 1px; background: linear-gradient(#c9c9c9, #8f8f8f); overflow: hidden; }
.app-btn svg { margin: -2px 0 0 -1px; }
.titlebar { display: grid; grid-template-columns: 529px 1fr 542px 183px; background: #fff; min-width: 0; }
.qat, .info { background: #d2d2d2; border: 1px solid #777; border-width: 2px 1px 2px 0; display: grid; }
.qat { padding-left: 5px; grid-template-columns: 29px 27px 28px 14px 29px 14px 28px 14px 10px 27px 14px 29px 28px 28px 9px 27px 14px 29px 28px 8px 28px 27px 10px 1fr; }
.active { background: #a9d1f7; outline: 2px solid #4592dc; outline-offset: -1px; }
.vsep { width: 1px; background: #bcbcbc; justify-self: center; }
.title { display: flex; align-items: center; justify-content: center; padding-left: 18px; white-space: nowrap; }
.info { border-left-width: 1px; grid-template-columns: 15px 212px 28px 29px 27px 124px 18px 35px 5px 33px 1fr; }
.search { border: 2px solid #222; background: #fff; padding: 0 3px; font-style: italic; margin: -1px 0; outline: 0; min-width: 0; }
.search::placeholder { color: #666; opacity: 1; }
.user { justify-content: flex-start; gap: 5px; padding-left: 6px; }
.winctl { display: grid; grid-template-columns: 54px 54px 54px; padding-left: 28px; overflow: hidden; }

.tabs { display: grid; padding-left: 5px; grid-template-columns: 99px 80px 75px 58px 81px 72px 116px 96px 53px 74px 73px 48px 85px 86px 73px 66px 204px 60px; align-items: end; border-bottom: 1px solid #8f8f8f; }
.tab { height: 23px; border: 0; background: none; padding: 0; white-space: nowrap; line-height: 20px; }
.tab.on { background: linear-gradient(#d4d4d4, #fafafa); border: 1px solid #f4f4f4; border-bottom: 0; margin: 0 1px; line-height: 19px; }
.tab.ctx { border: 2px solid #6fe02c; background: linear-gradient(#97b087, #b8d4a9); margin: 0 4px 1px; height: 22px; line-height: 18px; }
.cycle { height: 23px; padding-left: 12px; }

.ribbon { display: flex; background: #fff; height: 127px; flex: none; padding: 0 0 3px 3px; border-bottom: 1px solid #f0f0f0; }
.group { display: flex; flex-direction: column; border-right: 2px solid #d0d0d0; margin-top: 2px; }
.group.free { border-right: 0; width: 361px; }
.group.about { width: 62px; }
.tools { display: grid; flex: 1; }
.about .tools { grid-template-columns: 60px; }
.paid .tools { grid-template-columns: 102px 88px 88px 99px 88px 112px 91px 95px 94px; }
.free .tools { grid-template-columns: 91px 118px 89px 57px; }
.tool { position: relative; border: 0; background: none; padding: 5px 0 0; display: flex; flex-direction: column; align-items: center; justify-content: flex-start; min-width: 0; color: #444; }
.lbl { display: flex; flex-direction: column; align-items: center; line-height: 20px; margin-top: 5px; white-space: nowrap; }
.caret { position: absolute; right: 5px; top: 71px; }
.gname { height: 23px; background: #efefef; border: 1px solid #d6d6d6; border-width: 1px 0; text-align: center; line-height: 23px; color: #444; margin: 0 2px 0 0; }
.rest { flex: 1; background: linear-gradient(#e8e8e8, #a2a2a2); margin-top: 2px; }

.options { height: 35px; flex: none; background: #d9e4d1; padding: 0 10px; line-height: 38px; color: #a2a8a0; text-shadow: 1px 1px 0 #f4f8f0; }

.work { display: flex; flex: 1; min-height: 0; }
.side { width: 559px; flex: none; display: flex; flex-direction: column; padding-right: 4px; }
.panel { display: flex; flex-direction: column; }
.properties { margin-bottom: 6px; }
.browser { flex: 1; min-height: 0; }
.phead { margin: 0; height: 25px; background: #bfccdb; font: inherit; line-height: 25px; padding: 0 6px 0 5px; display: flex; justify-content: space-between; align-items: center; color: #111; flex: none; }
.pbody { margin-top: 2px; border-top: 2px solid #808080; border-left: 2px solid #808080; border-right: 1px solid #e0e0e0; border-bottom: 1px solid #fff; margin-right: 2px; }
.type { width: 100%; height: 95px; display: flex; align-items: center; border: 1px solid #d5d5d5; background: linear-gradient(#fdfdfd, #eaeaea); padding: 3px 2px 3px 3px; text-align: left; color: #444; }
.thumb { width: 78px; height: 87px; border: 1px solid #d3d3d3; display: flex; align-items: center; justify-content: center; background: linear-gradient(#fbfbfb, #f0f0f0); }
.tname { flex: 1; padding-left: 5px; }
.selrow { display: flex; align-items: center; height: 34px; padding: 2px 8px 2px 1px; }
.combo { display: grid; grid-template-columns: 1fr; align-items: center; flex: 1; height: 30px; }
.combo > * { grid-area: 1 / 1; }
.combo select { width: 100%; height: 100%; appearance: none; border: 1px solid #adadad; background: #e1e1e1; border-radius: 0; padding: 0 3px; color: #111; }
.combo svg { justify-self: end; margin-right: 5px; pointer-events: none; }
.edit { gap: 5px; padding-left: 7px; white-space: nowrap; }
.gridwrap { display: flex; height: 213px; overflow: hidden; }
.pgrid { flex: 1; border-collapse: separate; border-spacing: 0; table-layout: fixed; width: 100%; background: #fff; color: #111; }
.c1 { width: 260px; } .c3 { width: 14px; }
.pgrid th { height: 24px; background: #dcdcdc; font-weight: 400; text-align: left; padding: 0 7px 0 3px; }
.gh { display: flex; justify-content: space-between; align-items: center; }
.pgrid td { height: 24px; padding: 0 2px; border-bottom: 1px dotted #888; border-right: 1px dotted #888; line-height: 20px; }
.pgrid td.k { padding-left: 10px; }
.muted td { color: #888; }
.action td.v { padding: 1px; }
.pgrid tr:last-child td { height: 21px; border-bottom: 0; line-height: 19px; }
.cellbtn { display: block; width: 100%; height: 21px; border: 1px solid #aaa; border-bottom: 2px solid #999; border-right-width: 2px; background: #e1e1e1; padding: 0; line-height: 17px; }
.pgrid tr:last-child .cellbtn { height: 19px; line-height: 16px; }
.scroll { width: 18px; background: #f0f0f0; display: flex; flex-direction: column; align-items: center; padding: 8px 0 7px; flex: none; margin-left: 1px; }
.thumb1, .thumb2 { width: 17px; background: #cdcdcd; }
.thumb1 { height: 89px; margin-top: 7px; }
.down { margin-top: auto; }
.pfoot { display: flex; justify-content: space-between; align-items: flex-start; padding: 2px 3px 0; height: 33px; }
.pfoot a { color: #1a6ac9; line-height: 26px; }
.apply { width: 86px; height: 27px; border: 1px solid #bfbfbf; background: #cccccc; color: #8a8a8a; padding: 0; }

.tbody { margin: 2px 2px 3px 0; border-top: 2px solid #808080; border-left: 2px solid #808080; background: #fff; display: flex; flex: 1; min-height: 0; overflow: hidden; }
.tree { list-style: none; margin: 0; padding: 0; flex: 1; overflow: hidden; }
.tree li { display: flex; align-items: center; height: 24px; margin-left: -2px; }
.node { padding: 0 4px; line-height: 23px; white-space: nowrap; }
.l1 .node { padding-left: 6px; }
.bold { font-weight: 700; background: #e2e2e2; color: #000; }
.thumb2 { height: 61px; margin-top: 90px; }

.canvas { flex: 1; min-width: 0; background: #d0d0d0; border-top: 2px solid #808080; border-left: 2px solid #808080; display: flex; justify-content: space-between; align-items: flex-start; overflow: hidden; }
.sched { border-collapse: collapse; table-layout: fixed; width: 459px; font: 12px/16px "Liberation Sans", Arial, sans-serif; color: #111; }
.sched .a { width: 151px; } .sched .b { width: 193px; }
.sched tr { height: 21px; }
.sched th, .sched td { padding: 0 3px; }
.sched .t { height: 52px; }
.sched .t th { font-size: 18px; font-weight: 400; background: #fff; border: 2px solid #111; }
.sched .abc { height: 22px; }
.sched .abc th { background: #f0f0f0; border: 2px solid #111; font-size: 13px; }
.sched .names th { font-weight: 400; background: #fff; border: 2px solid #111; border-left: 1px dotted #777; border-right: 1px dotted #777; }
.sched .names th:first-child { border-left: 2px solid #111; }
.sched .names th:last-child { border-right: 2px solid #111; }
.sched .gap td { border-left: 2px solid #111; }
.sched tbody { border: 2px solid #111; background: #fff; }
.sched tbody td { border: 1px dotted #777; }
.sched tbody tr:nth-child(3n) { height: 22px; }
.mdi { background: #fff; display: flex; align-items: center; gap: 6px; height: 24px; width: 57px; padding-left: 3px; flex: none; }

.status { height: 32px; flex: none; border-top: 2px solid #a0a0a0; background: linear-gradient(#dedede, #c2c2c2); display: flex; align-items: center; gap: 2px; padding-left: 3px; color: #222; }
.ready { width: 405px; }
.cell { width: 29px; height: 28px; display: flex; align-items: center; justify-content: center; gap: 4px; background: #dcdcdc; }
.wide { width: 62px; }
.st { flex: none; width: 242px; height: 26px; margin-left: 3px; }
.st select { background: #fff; border-color: #ccc; color: #555; }
.push { flex: 1; }
.last { width: 95px; justify-content: flex-start; padding-left: 4px; gap: 1px; }

.shade { position: absolute; left: 120px; right: 0; bottom: 0; height: 120px; background: rgba(0, 0, 0, .61); }
.badge { position: absolute; left: 0; bottom: 0; width: 120px; height: 120px; background: #d40000; mix-blend-mode: multiply; }
.caption { position: absolute; left: 0; right: 0; bottom: 0; height: 120px; display: flex; color: #fff; font-family: "Liberation Sans", Arial, sans-serif; overflow: hidden; }
.step { display: grid; width: 120px; }
.step > * { grid-area: 1 / 1; }
.step strong { font-size: 64px; line-height: 108px; text-align: center; }
.msg { margin: 0; padding: 25px 0 0 18px; font-size: 19px; line-height: 22px; flex: 1; }
.brand { width: 176px; padding-top: 18px; display: flex; flex-direction: column; align-items: center; }
.brand svg { filter: drop-shadow(0 0 6px rgba(0, 0, 0, .4)); }
.brand b { font-size: 18px; line-height: 21px; text-align: center; margin-top: -2px; }
</style>
